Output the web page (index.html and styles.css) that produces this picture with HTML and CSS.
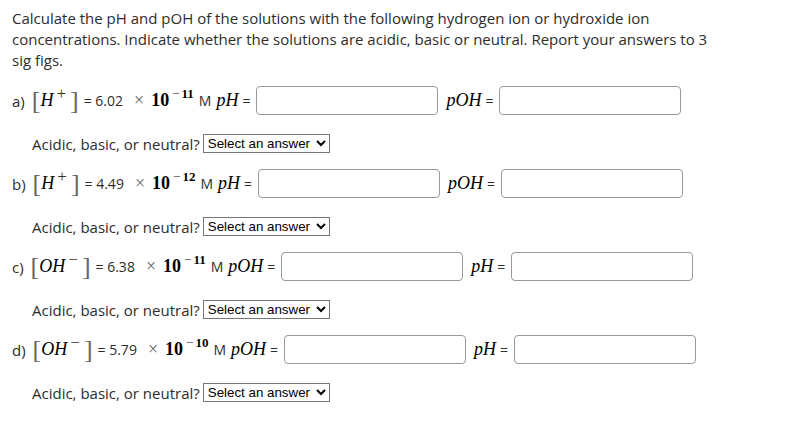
FILE: index.html
```html
<!DOCTYPE html>
<html>
<head>
<meta charset="utf-8">
<link rel="stylesheet" href="styles.css">
</head>
<body>
<div class="page">
  <p class="intro">Calculate the pH and pOH of the solutions with the following hydrogen ion or hydroxide ion concentrations. Indicate whether the solutions are acidic, basic or neutral. Report your answers to 3 sig figs.</p>

  <div class="question">
    <div class="row">
      <span class="label">a)</span>
      <span class="math conc"><span class="br">[</span><i class="v">H</i><sup class="sg">+</sup><span class="br">]</span></span>
      <span class="txt">= 6.02</span>
      <span class="math sci"><span class="times">×</span><b class="ten">10</b><sup class="ex"><span class="mn">−</span>11</sup></span>
      <span class="txt unit">M</span>
      <span class="math q"><i class="v">pH</i></span><span class="txt eq">=</span>
      <input class="ans" type="text">
      <span class="math q"><i class="v">pOH</i></span><span class="txt eq">=</span>
      <input class="ans" type="text">
    </div>
    <div class="choice">
      <span class="ctxt">Acidic, basic, or neutral?</span>
      <select class="pick"><option>Select an answer</option></select>
    </div>
  </div>

  <div class="question">
    <div class="row">
      <span class="label">b)</span>
      <span class="math conc"><span class="br">[</span><i class="v">H</i><sup class="sg">+</sup><span class="br">]</span></span>
      <span class="txt">= 4.49</span>
      <span class="math sci"><span class="times">×</span><b class="ten">10</b><sup class="ex"><span class="mn">−</span>12</sup></span>
      <span class="txt unit">M</span>
      <span class="math q"><i class="v">pH</i></span><span class="txt eq">=</span>
      <input class="ans" type="text">
      <span class="math q"><i class="v">pOH</i></span><span class="txt eq">=</span>
      <input class="ans" type="text">
    </div>
    <div class="choice">
      <span class="ctxt">Acidic, basic, or neutral?</span>
      <select class="pick"><option>Select an answer</option></select>
    </div>
  </div>

  <div class="question">
    <div class="row">
      <span class="label">c)</span>
      <span class="math conc"><span class="br">[</span><i class="v">OH</i><sup class="sg">−</sup><span class="br">]</span></span>
      <span class="txt">= 6.38</span>
      <span class="math sci"><span class="times">×</span><b class="ten">10</b><sup class="ex"><span class="mn">−</span>11</sup></span>
      <span class="txt unit">M</span>
      <span class="math q"><i class="v">pOH</i></span><span class="txt eq">=</span>
      <input class="ans" type="text">
      <span class="math q"><i class="v">pH</i></span><span class="txt eq">=</span>
      <input class="ans" type="text">
    </div>
    <div class="choice">
      <span class="ctxt">Acidic, basic, or neutral?</span>
      <select class="pick"><option>Select an answer</option></select>
    </div>
  </div>

  <div class="question">
    <div class="row">
      <span class="label">d)</span>
      <span class="math conc"><span class="br">[</span><i class="v">OH</i><sup class="sg">−</sup><span class="br">]</span></span>
      <span class="txt">= 5.79</span>
      <span class="math sci"><span class="times">×</span><b class="ten">10</b><sup class="ex"><span class="mn">−</span>10</sup></span>
      <span class="txt unit">M</span>
      <span class="math q"><i class="v">pOH</i></span><span class="txt eq">=</span>
      <input class="ans" type="text">
      <span class="math q"><i class="v">pH</i></span><span class="txt eq">=</span>
      <input class="ans" type="text">
    </div>
    <div class="choice">
      <span class="ctxt">Acidic, basic, or neutral?</span>
      <select class="pick"><option>Select an answer</option></select>
    </div>
  </div>
</div>
</body>
</html>
```

FILE: styles.css
```css
html, body {
  margin: 0;
  padding: 0;
  background: #fff;
}

.page {
  padding: 8px 12px 0 12px;
  font-family: "Open Sans", "Liberation Sans", sans-serif;
  font-size: 15px;
  color: #2d2d2d;
}

.intro {
  margin: 0 0 15px 0;
  line-height: 21px;
  max-width: 710px;
}

.question {
  display: flex;
  flex-direction: column;
  margin-bottom: 16px;
}

.row {
  display: flex;
  align-items: center;
  height: 29px;
  white-space: nowrap;
  font-size: 14px;
}

.label {
  margin-right: 7px;
  font-size: 15px;
}

.math {
  font-family: "Liberation Serif", "DejaVu Serif", serif;
  color: #000;
  display: inline-flex;
  align-items: center;
}

.v {
  font-style: italic;
  font-size: 18px;
}

.br {
  font-size: 26px;
  color: #666;
  line-height: 1;
}

.sg {
  font-size: 17px;
  line-height: 1;
  position: relative;
  top: -7px;
  margin: 0 4px 0 3px;
  vertical-align: baseline;
  color: #333;
}

.txt {
  font-size: 14px;
}

.conc + .txt {
  margin-left: 5px;
}

.sci {
  margin-left: 11px;
}

.times {
  color: #666;
  font-size: 18px;
  margin-right: 7px;
}

.ten {
  font-size: 18px;
  font-weight: bold;
}

.ex {
  font-size: 13px;
  font-weight: bold;
  position: relative;
  top: -7px;
  margin-left: 3px;
  vertical-align: baseline;
}

.mn {
  font-weight: normal;
  color: #444;
  margin-right: 2px;
}

.unit {
  margin-left: 5px;
}

.q {
  margin-left: 5px;
}

.eq {
  margin-left: 4px;
}

.ans {
  box-sizing: border-box;
  width: 182px;
  height: 29px;
  margin: 0 3px 0 6px;
  border: 1px solid #999;
  border-radius: 4px;
  background: #fff;
  padding: 0 6px;
}

.choice {
  display: flex;
  align-items: center;
  height: 19px;
  margin-top: 19px;
  padding-left: 20px;
}

.ctxt {
  font-size: 15px;
}

.pick {
  margin-left: 3px;
  width: 127px;
  height: 19px;
  font-family: "Liberation Sans", Arial, sans-serif;
  font-size: 13.33px;
  color: #000;
  border: 1px solid #767676;
  border-radius: 0;
  background: #fff;
  padding: 0;
}
```
